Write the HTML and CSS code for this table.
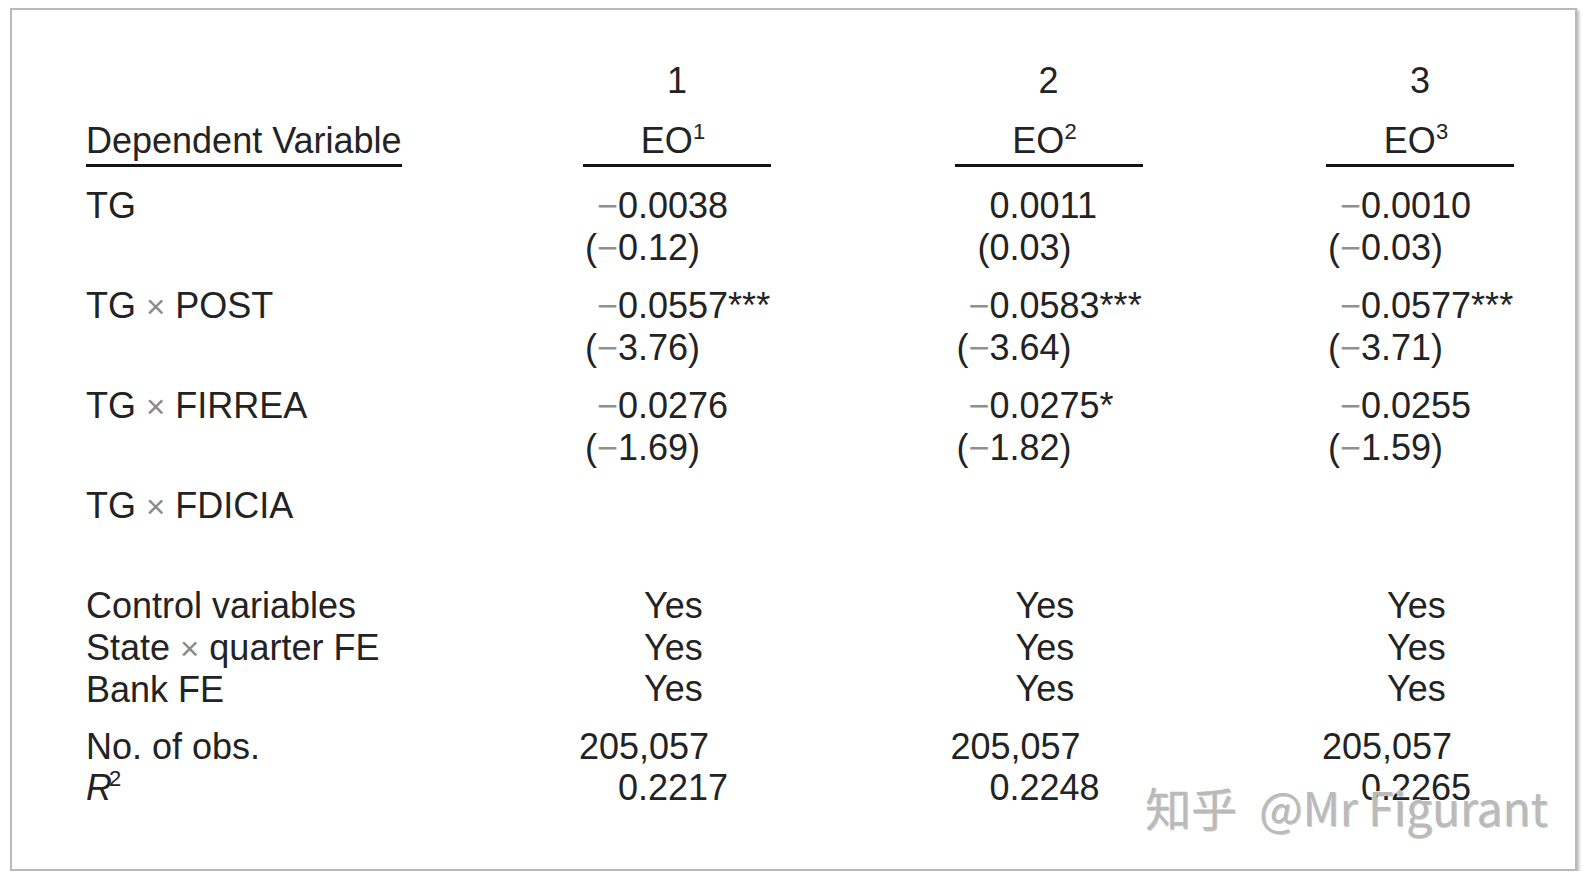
FILE: index.html
```html
<!DOCTYPE html>
<html lang="en">
<head>
<meta charset="utf-8">
<title>Regression table</title>
<link rel="stylesheet" href="styles.css">
</head>
<body>
<div class="frame">
  <div class="row row-num">
    <div class="lab"></div>
    <div class="col c">1</div>
    <div class="col c">2</div>
    <div class="col c">3</div>
  </div>
  <div class="row row-eo">
    <div class="lab"><span class="dv">Dependent Variable</span></div>
    <div class="col c eo">EO<sup class="sp">1</sup></div>
    <div class="col c eo">EO<sup class="sp">2</sup></div>
    <div class="col c eo">EO<sup class="sp">3</sup></div>
  </div>
  <div class="row row-first">
    <div class="lab">TG</div>
    <div class="col">
      <div class="v"><span class="ld"><i class="m">−</i></span><span>0.0038</span></div>
      <div class="v"><span class="ld">(<i class="m">−</i></span><span>0.12)</span></div>
    </div>
    <div class="col">
      <div class="v"><span class="ld"></span><span>0.0011</span></div>
      <div class="v"><span class="ld">(</span><span>0.03)</span></div>
    </div>
    <div class="col">
      <div class="v"><span class="ld"><i class="m">−</i></span><span>0.0010</span></div>
      <div class="v"><span class="ld">(<i class="m">−</i></span><span>0.03)</span></div>
    </div>
  </div>
  <div class="row">
    <div class="lab">TG <i class="x">×</i> POST</div>
    <div class="col">
      <div class="v"><span class="ld"><i class="m">−</i></span><span>0.0557***</span></div>
      <div class="v"><span class="ld">(<i class="m">−</i></span><span>3.76)</span></div>
    </div>
    <div class="col">
      <div class="v"><span class="ld"><i class="m">−</i></span><span>0.0583***</span></div>
      <div class="v"><span class="ld">(<i class="m">−</i></span><span>3.64)</span></div>
    </div>
    <div class="col">
      <div class="v"><span class="ld"><i class="m">−</i></span><span>0.0577***</span></div>
      <div class="v"><span class="ld">(<i class="m">−</i></span><span>3.71)</span></div>
    </div>
  </div>
  <div class="row">
    <div class="lab">TG <i class="x">×</i> FIRREA</div>
    <div class="col">
      <div class="v"><span class="ld"><i class="m">−</i></span><span>0.0276</span></div>
      <div class="v"><span class="ld">(<i class="m">−</i></span><span>1.69)</span></div>
    </div>
    <div class="col">
      <div class="v"><span class="ld"><i class="m">−</i></span><span>0.0275*</span></div>
      <div class="v"><span class="ld">(<i class="m">−</i></span><span>1.82)</span></div>
    </div>
    <div class="col">
      <div class="v"><span class="ld"><i class="m">−</i></span><span>0.0255</span></div>
      <div class="v"><span class="ld">(<i class="m">−</i></span><span>1.59)</span></div>
    </div>
  </div>
  <div class="row row-two">
    <div class="lab">TG <i class="x">×</i> FDICIA</div>
    <div class="col"></div>
    <div class="col"></div>
    <div class="col"></div>
  </div>
  <div class="row">
    <div class="lab">
      <div>Control variables</div>
      <div>State <i class="x">×</i> quarter FE</div>
      <div>Bank FE</div>
    </div>
    <div class="col"><div class="yes">Yes</div><div class="yes">Yes</div><div class="yes">Yes</div></div>
    <div class="col"><div class="yes">Yes</div><div class="yes">Yes</div><div class="yes">Yes</div></div>
    <div class="col"><div class="yes">Yes</div><div class="yes">Yes</div><div class="yes">Yes</div></div>
  </div>
  <div class="row row-last">
    <div class="lab">
      <div>No. of obs.</div>
      <div><i class="r">R</i><sup class="r2">2</sup></div>
    </div>
    <div class="col">
      <div class="obs">205,057</div>
      <div class="v"><span class="ld"></span><span>0.2217</span></div>
    </div>
    <div class="col">
      <div class="obs">205,057</div>
      <div class="v"><span class="ld"></span><span>0.2248</span></div>
    </div>
    <div class="col">
      <div class="obs">205,057</div>
      <div class="v"><span class="ld"></span><span>0.2265</span></div>
    </div>
  </div>
  <div class="wm"><span class="wm-cn">知乎</span><span class="wm-en">@Mr Figurant</span></div>
</div>
</body>
</html>
```

FILE: styles.css
```css
html, body {
  margin: 0;
  padding: 0;
  background: #ffffff;
}

body {
  font-family: "Liberation Sans", Arial, sans-serif;
  color: #232323;
}

.frame {
  position: relative;
  box-sizing: border-box;
  margin: 8px 0 0 10px;
  width: 1567px;
  height: 863px;
  border: 2px solid #b9b9b9;
  box-shadow: 2px 2px 3px rgba(0, 0, 0, 0.28);
  padding: 50px 0 0 74px;
  background: #fff;
  overflow: hidden;
}

.row {
  display: grid;
  grid-template-columns: 313.5px repeat(3, 188px);
  column-gap: 183.5px;
  font-size: 36px;
  line-height: 41.5px;
  margin-top: 17px;
}

.row-num {
  margin-top: 0;
}

.row-eo {
  margin-top: 18.5px;
}

.row-first {
  margin-top: 18.5px;
}

.row-two {
  min-height: 83px;
}

.row-last {
  margin-top: 15px;
}

.lab {
  white-space: nowrap;
}

.c {
  text-align: center;
}

.eo {
  padding-bottom: 2px;
  border-bottom: 3px solid #151515;
  padding-right: 8px;
  box-sizing: border-box;
}

.dv {
  display: inline-block;
  padding-bottom: 2px;
  border-bottom: 3px solid #151515;
}

.sp {
  font-size: 22px;
  line-height: 0;
  vertical-align: 14px;
}

.v {
  display: flex;
  white-space: nowrap;
}

.ld {
  flex: none;
  width: 35px;
  text-align: right;
}

.m {
  font-style: normal;
  color: #8f8f8f;
}

.x {
  font-style: normal;
  color: #8a8a8a;
  font-size: 33px;
}

.yes {
  padding-left: 61px;
}

.obs {
  margin-left: -4px;
}

.r {
  font-style: italic;
}

.r2 {
  font-size: 22px;
  line-height: 0;
  vertical-align: 14px;
  margin-left: -3px;
}

.wm {
  position: absolute;
  left: 1133px;
  top: 773px;
  font-family: "Noto Sans CJK SC", "Noto Sans", sans-serif;
  font-size: 46px;
  line-height: 46px;
  color: #bababa;
  text-shadow: -1px -1px 0 rgba(255, 255, 255, 0.85), 1px 1px 0 rgba(120, 120, 120, 0.4);
  white-space: nowrap;
}

.wm-cn {
  margin-right: 22px;
}
```
